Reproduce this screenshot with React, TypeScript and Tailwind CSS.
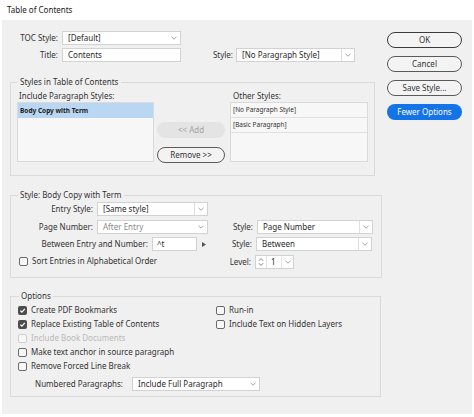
import React from "react";

function Chevron() {
  return (
    <svg width="6" height="4" viewBox="0 0 6 4" className="block">
      <polyline points="0.5,0.8 3,3.2 5.5,0.8" fill="none" stroke="#9a9a9a" strokeWidth="0.9" />
    </svg>
  );
}

function Select({
  className,
  text,
  sep,
  dim,
}: {
  className: string;
  text: string;
  sep?: boolean;
  dim?: boolean;
}) {
  return (
    <div className={`flex h-[14px] items-center border border-[#d2d2d2] bg-white ${className}`}>
      <span className={`flex-1 whitespace-nowrap pl-[5px] leading-[12px] ${dim ? "text-[#8a8a8a]" : "text-[#2a2a2a]"}`}>{text}</span>
      {sep && <span className="h-full w-px bg-[#dedede]" />}
      <span className="flex w-[12px] justify-center">
        <Chevron />
      </span>
    </div>
  );
}

function Checkbox({ checked, disabled }: { checked?: boolean; disabled?: boolean }) {
  if (checked) {
    return (
      <span className="flex h-[9px] w-[9px] items-center justify-center rounded-[2px] bg-[#4d4d4d]">
        <svg width="7" height="7" viewBox="0 0 7 7">
          <polyline points="1.3,3.6 2.9,5.1 5.8,1.8" fill="none" stroke="#ffffff" strokeWidth="1.2" />
        </svg>
      </span>
    );
  }
  return (
    <span
      className={`block h-[9px] w-[9px] rounded-[2px] border bg-[#f7f7f7] ${
        disabled ? "border-[#cfcfcf]" : "border-[#6a6a6a]"
      }`}
    />
  );
}

function CheckRow({
  label,
  checked,
  disabled,
}: {
  label: string;
  checked?: boolean;
  disabled?: boolean;
}) {
  return (
    <div className="flex h-[14px] items-center gap-[4px]">
      <Checkbox checked={checked} disabled={disabled} />
      <span className={disabled ? "text-[#b9b9b9]" : "text-[#333]"}>{label}</span>
    </div>
  );
}

function Btn({ children, primary, thick }: { children: React.ReactNode; primary?: boolean; thick?: boolean }) {
  if (primary) {
    return (
      <div className="flex h-[16px] w-[75px] items-center justify-center rounded-full bg-[#1473e6] text-white">
        {children}
      </div>
    );
  }
  return (
    <div
      className={`flex h-[16px] w-[75px] items-center justify-center rounded-full bg-[#f3f3f3] text-[#333] ${
        thick ? "border-[1.5px] border-[#3c3c3c]" : "border border-[#5a5a5a]"
      }`}
    >
      {children}
    </div>
  );
}

export default function App() {
  return (
    <div className="flex h-[417px] w-[474px] flex-col bg-white font-['Noto_Sans',sans-serif] text-[8px] leading-[12px] text-[#333]">
      <div className="flex h-[20px] items-center pl-[7px] text-[#222]">Table of Contents</div>
      <div className="mx-[2px] flex h-[394px] bg-[#f0f0f0]">
        {/* left content */}
        <div className="flex w-[379px] flex-col pl-[8px] pt-[11px]">
          <div className="flex h-[14px] items-center">
            <span className="w-[48px] text-right">TOC Style:</span>
            <Select className="ml-[4px] w-[119px]" text="[Default]" />
          </div>
          <div className="mt-[3px] flex h-[14px] items-center">
            <span className="w-[48px] text-right">Title:</span>
            <div className="ml-[4px] flex h-[14px] w-[119px] items-center border border-[#d2d2d2] bg-white pl-[5px] text-[#2a2a2a]">
              Contents
            </div>
            <span className="w-[52px] text-right">Style:</span>
            <Select className="ml-[3px] w-[119px]" text="[No Paragraph Style]" sep />
          </div>

          <fieldset className="mt-[14px] w-[365px] border border-[#dadada] px-[6px] pb-[12px] pt-[2px]">
            <legend className="px-[3px] leading-[12px]">Styles in Table of Contents</legend>
            <div className="flex">
              <div className="flex w-[137px] flex-col">
                <div className="h-[12px] pl-[2px]">Include Paragraph Styles:</div>
                <div className="h-[60px] border border-[#dadada] bg-[#f7f7f7]">
                  <div className="flex h-[15px] items-center bg-[#b9d6f2] pl-[2px] text-[6.5px] font-bold text-[#1a1a1a]">
                    Body Copy with Term
                  </div>
                </div>
              </div>
              <div className="ml-[3px] flex w-[68px] flex-col">
                <div className="mt-[32px] flex h-[16px] items-center justify-center rounded-full bg-[#e4e4e4] text-[#a3a3a3]">
                  &lt;&lt; Add
                </div>
                <div className="mt-[9px] flex h-[16px] items-center justify-center rounded-full border border-[#5a5a5a] bg-[#f3f3f3]">
                  Remove &gt;&gt;
                </div>
              </div>
              <div className="ml-[5px] flex w-[138px] flex-col">
                <div className="h-[12px] pl-[3px]">Other Styles:</div>
                <div className="h-[60px] border border-[#dadada] bg-[#f7f7f7] text-[6.5px] text-[#333]">
                  <div className="flex h-[15px] items-center border-b border-[#e0e0e0] pl-[2px]">[No Paragraph Style]</div>
                  <div className="flex h-[15px] items-center border-b border-[#e0e0e0] pl-[2px]">[Basic Paragraph]</div>
                </div>
              </div>
            </div>
          </fieldset>

          <fieldset className="mt-[13px] w-[371px] border border-[#dadada] pb-[8px] pl-[7px] pr-[8px] pt-[1px]">
            <legend className="px-[2px] leading-[12px]">Style: Body Copy with Term</legend>
            <div className="flex h-[14px] items-center">
              <span className="w-[75px] text-right">Entry Style:</span>
              <Select className="ml-[4px] w-[111px]" text="[Same style]" sep />
            </div>
            <div className="mt-[4px] flex h-[14px] items-center">
              <span className="w-[75px] text-right">Page Number:</span>
              <Select className="ml-[4px] w-[111px]" text="After Entry" dim />
              <span className="w-[45px] text-right">Style:</span>
              <Select className="ml-[4px] w-[116px]" text="Page Number" sep />
            </div>
            <div className="mt-[3px] flex h-[14px] items-center">
              <span className="w-[130px] text-right">Between Entry and Number:</span>
              <div className="ml-[4px] flex h-[14px] w-[45px] items-center border border-[#d2d2d2] bg-white pl-[4px] text-[#2a2a2a]">
                ^t
              </div>
              <svg width="4" height="5" viewBox="0 0 4 5" className="ml-[5px]">
                <polygon points="0,0 4,2.5 0,5" fill="#555" />
              </svg>
              <span className="w-[46px] text-right">Style:</span>
              <Select className="ml-[4px] w-[116px]" text="Between" sep />
            </div>
            <div className="mt-[4px] flex h-[14px] items-center">
              <div className="flex w-[208px] items-center gap-[4px] self-start pl-[1px]">
                <Checkbox />
                <span>Sort Entries in Alphabetical Order</span>
              </div>
              <span className="w-[25px] text-right">Level:</span>
              <div className="ml-[4px] flex h-[14px] w-[39px] items-center border border-[#d2d2d2] bg-white">
                <span className="flex w-[10px] justify-center">
                  <svg width="6" height="10" viewBox="0 0 6 10">
                    <polyline points="0.8,3.8 3,1.5 5.2,3.8" fill="none" stroke="#777" strokeWidth="0.9" />
                    <polyline points="0.8,6.2 3,8.5 5.2,6.2" fill="none" stroke="#777" strokeWidth="0.9" />
                  </svg>
                </span>
                <span className="h-full w-px bg-[#e3e3e3]" />
                <span className="flex-1 pl-[4px] text-[#2a2a2a]">1</span>
                <span className="h-full w-px bg-[#e3e3e3]" />
                <span className="flex w-[11px] justify-center">
                  <Chevron />
                </span>
              </div>
            </div>
          </fieldset>

          <fieldset className="mt-[12px] w-[371px] border border-[#dadada] pb-[5px] pl-[7px] pt-[1px]">
            <legend className="ml-[1px] px-[2px] leading-[12px]">Options</legend>
            <div className="flex">
              <div className="flex w-[198px] flex-col">
                <CheckRow label="Create PDF Bookmarks" checked />
                <CheckRow label="Replace Existing Table of Contents" checked />
                <CheckRow label="Include Book Documents" disabled />
                <CheckRow label="Make text anchor in source paragraph" />
                <CheckRow label="Remove Forced Line Break" />
              </div>
              <div className="flex flex-col">
                <CheckRow label="Run-in" />
                <CheckRow label="Include Text on Hidden Layers" />
              </div>
            </div>
            <div className="mt-[4px] flex h-[14px] items-center">
              <span className="w-[105px] text-right">Numbered Paragraphs:</span>
              <Select className="ml-[9px] w-[128px]" text="Include Full Paragraph" />
            </div>
          </fieldset>
        </div>

        {/* right buttons */}
        <div className="ml-[6px] flex flex-col gap-[8px] pt-[12px]">
          <Btn thick>OK</Btn>
          <Btn>Cancel</Btn>
          <Btn>Save Style...</Btn>
          <Btn primary>Fewer Options</Btn>
        </div>
      </div>
    </div>
  );
}
